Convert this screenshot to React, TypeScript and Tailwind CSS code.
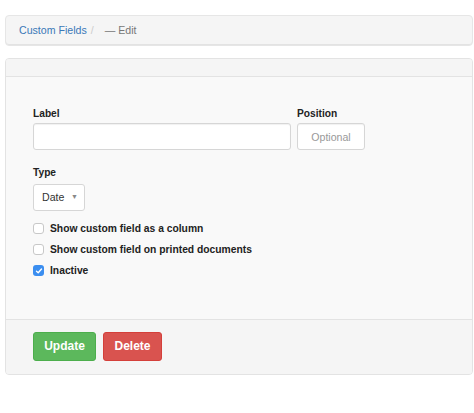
import { useState } from 'react';

export default function App() {
  const [label, setLabel] = useState('');
  const [position, setPosition] = useState('');
  const [type, setType] = useState('Date');
  const [asColumn, setAsColumn] = useState(false);
  const [onPrinted, setOnPrinted] = useState(false);
  const [inactive, setInactive] = useState(true);

  return (
    <div className="min-h-[413px] bg-white pt-[15px] pl-[5px] pr-[1px] font-['Helvetica_Neue','Liberation_Sans',Arial,sans-serif] text-[#333]">
      {/* Breadcrumb */}
      <div className="flex h-[31px] items-center rounded-[4px] border border-[#e6e6e6] bg-[#f5f5f5] pl-[13px] text-[10.6px] shadow-[inset_0_-1px_0_#e3e3e3]">
        <a href="#" className="text-[#3a78b8]">Custom Fields</a>
        <span className="ml-[4px] text-[#ccc]">/</span>
        <span className="ml-[11px] text-[#777]">— Edit</span>
      </div>

      {/* Panel */}
      <div className="mt-[12px] overflow-hidden rounded-[4px] border border-[#e3e3e3] bg-[#f9f9f9]">
        <div className="h-[18px] border-b border-[#e3e3e3] bg-[#f5f5f5]" />

        <div className="px-[27px] pt-[29px] pb-[42px]">
          <div className="flex gap-[6px]">
            <div className="flex flex-col">
              <label className="mb-[2px] text-[10.2px] font-bold text-[#222]">Label</label>
              <input
                value={label}
                onChange={(e) => setLabel(e.target.value)}
                className="h-[27px] w-[258px] rounded-[3px] border border-[#d6d6d6] bg-white px-2 text-[11px] shadow-[inset_0_1px_1px_rgba(0,0,0,0.06)] outline-none"
              />
            </div>
            <div className="flex flex-col">
              <label className="mb-[2px] text-[10.2px] font-bold text-[#222]">Position</label>
              <input
                value={position}
                onChange={(e) => setPosition(e.target.value)}
                placeholder="Optional"
                className="h-[27px] w-[68px] rounded-[3px] border border-[#d6d6d6] bg-white px-2 text-center text-[10.6px] shadow-[inset_0_1px_1px_rgba(0,0,0,0.06)] outline-none placeholder:text-[#999]"
              />
            </div>
          </div>

          <div className="mt-[15px] flex flex-col">
            <label className="mb-[3px] text-[10.2px] font-bold text-[#222]">Type</label>
            <div className="relative h-[27px] w-[52px]">
              <select
                value={type}
                onChange={(e) => setType(e.target.value)}
                className="h-full w-full appearance-none rounded-[3px] border border-[#d6d6d6] bg-white pl-[8px] text-[10.6px] text-[#333] outline-none"
              >
                <option>Date</option>
                <option>Text</option>
                <option>Number</option>
              </select>
              <span className="pointer-events-none absolute right-[7px] top-[8px] text-[7px] text-[#888]">▼</span>
            </div>
          </div>

          <div className="mt-[12px] flex flex-col gap-[9px]">
            {[
              { text: 'Show custom field as a column', v: asColumn, set: setAsColumn },
              { text: 'Show custom field on printed documents', v: onPrinted, set: setOnPrinted },
              { text: 'Inactive', v: inactive, set: setInactive },
            ].map((c) => (
              <label key={c.text} className="flex h-[12px] items-center gap-[6px] text-[10.3px] font-bold text-[#222]">
                <span
                  onClick={() => c.set(!c.v)}
                  className={
                    c.v
                      ? 'flex h-[11px] w-[11px] items-center justify-center rounded-[3px] bg-[#3b8ef0]'
                      : 'flex h-[11px] w-[11px] items-center justify-center rounded-[3px] border border-[#c8c8c8] bg-white'
                  }
                >
                  {c.v && (
                    <svg width="8" height="8" viewBox="0 0 8 8">
                      <path d="M1.5 4.2 L3.2 5.8 L6.5 2" fill="none" stroke="white" strokeWidth="1.4" strokeLinecap="round" strokeLinejoin="round" />
                    </svg>
                  )}
                </span>
                {c.text}
              </label>
            ))}
          </div>
        </div>

        <div className="flex gap-[7px] border-t border-[#e3e3e3] bg-[#f5f5f5] px-[27px] pt-[12px] pb-[13px]">
          <button className="h-[29px] w-[63px] rounded-[3px] border border-[#4cae4c] bg-[#5cb85c] text-[12px] font-bold text-white">
            Update
          </button>
          <button className="h-[29px] w-[59px] rounded-[3px] border border-[#d43f3a] bg-[#d9534f] text-[12px] font-bold text-white">
            Delete
          </button>
        </div>
      </div>
    </div>
  );
}
